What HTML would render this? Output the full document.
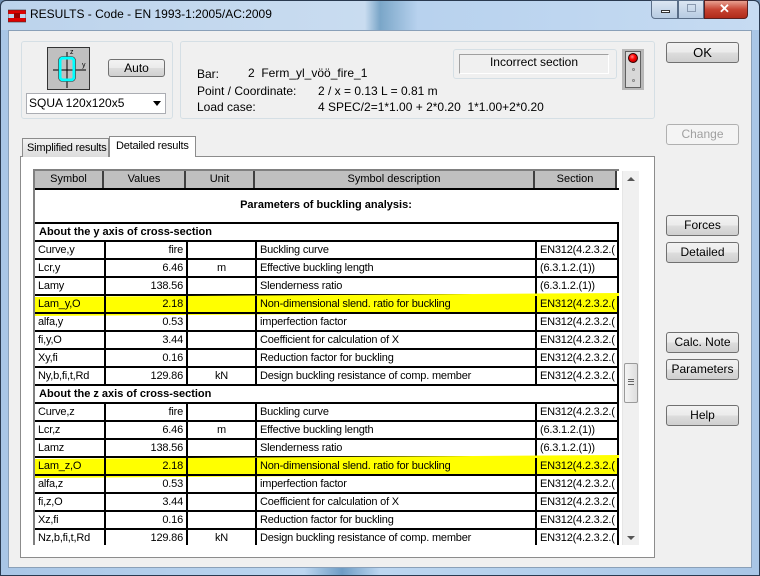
<!DOCTYPE html>
<html><head><meta charset="utf-8"><style>
*{box-sizing:border-box;margin:0;padding:0}
body{width:760px;height:576px;overflow:hidden;background:#6e8db0;font-family:"Liberation Sans",sans-serif;font-size:11px;color:#000;position:relative}
.a{position:absolute;white-space:nowrap}
.btn{position:absolute;border:1px solid #707070;border-radius:3px;background:linear-gradient(#f2f2f2,#ebebeb 50%,#dddddd 51%,#cfcfcf);text-align:center;font-size:12px;line-height:19px;white-space:nowrap}
.grp{position:absolute;border:1px solid #d5dfe5;border-radius:3px}
.c{position:absolute;height:18px;line-height:17px;padding:0 3px;white-space:nowrap;overflow:hidden;font-size:11px;letter-spacing:-0.2px}
.h{position:absolute;background:#c0c0c0;text-align:center;line-height:16px;height:17px;border-right:2px solid #404040}
</style></head><body>
<div class="a" style="left:0;top:0;width:760px;height:576px;background:linear-gradient(90deg,#a9c6e6,#bcd6f0 40%,#6e9cc4 45%,#bcd6f0 50%,#a9c6e6);border:1px solid #2a3a50;border-radius:6px 6px 0 0"></div>
<div class="a" style="left:0;top:0;width:760px;height:30px;background:linear-gradient(90deg,#bcd3ec 0,#c9dcf0 48%,#7aa6c8 50%,#b8d2ee 55%,#c6dbf2);border-radius:6px 6px 0 0;border:1px solid #2a3a50;border-bottom:none"></div>
<svg class="a" style="left:8px;top:8px" width="18" height="16"><rect x="0" y="2" width="18" height="4" fill="#d00"/><rect x="6" y="5" width="6" height="6" fill="#900"/><rect x="0" y="10" width="18" height="4" fill="#d00"/><rect x="0" y="2" width="18" height="12" fill="none" stroke="#333" stroke-width=".6"/></svg>
<div class="a" style="left:30px;top:7px;font-size:12px">RESULTS - Code - EN 1993-1:2005/AC:2009</div>
<div class="a" style="left:651px;top:0;width:27px;height:19px;border:1px solid #5a6e88;border-radius:0 0 0 4px;background:linear-gradient(#dbe6f3,#b7cbe2)"></div>
<div class="a" style="left:661px;top:10px;width:9px;height:3px;background:#fff;border:1px solid #333"></div>
<div class="a" style="left:678px;top:0;width:26px;height:19px;border:1px solid #5a6e88;background:linear-gradient(#dbe6f3,#b7cbe2)"></div>
<div class="a" style="left:687px;top:4px;width:9px;height:8px;border:1px solid #8a9ab0"></div>
<div class="a" style="left:704px;top:0;width:44px;height:19px;border:1px solid #5a2020;border-radius:0 0 4px 0;background:linear-gradient(#e8a090,#c74433 50%,#b02a1a)"></div>
<div class="a" style="left:719px;top:1px;color:#fff;font-weight:bold;font-size:13px">✕</div>
<div class="a" style="left:8px;top:30px;width:744px;height:538px;background:#f0f0f0;border:1px solid #8aa0b8"></div>
<div class="grp" style="left:21px;top:41px;width:152px;height:78px"></div>
<div class="a" style="left:47px;top:47px;width:43px;height:43px;background:#c0c0c0;border:1px solid #333"></div>
<svg class="a" style="left:48px;top:48px" width="41" height="41"><line x1="5" y1="22" x2="38" y2="22" stroke="#000"/><line x1="19" y1="4" x2="19" y2="40" stroke="#000"/><rect x="12" y="10" width="14" height="22" rx="3" fill="none" stroke="#0ff" stroke-width="3"/><rect x="10.5" y="8.5" width="17" height="25" rx="4" fill="none" stroke="#333" stroke-width=".6"/><text x="22" y="6" font-size="7" font-family="Liberation Sans">z</text><text x="34" y="19" font-size="7" font-family="Liberation Sans">y</text></svg>
<div class="btn" style="left:108px;top:59px;width:57px;height:18px;line-height:16px">Auto</div>
<div class="a" style="left:26px;top:93px;width:140px;height:21px;background:#fff;border:1px solid #abadb3;font-size:12px;line-height:19px;padding-left:2px">SQUA 120x120x5</div>
<div class="a" style="left:153px;top:101px;border:4px solid transparent;border-top:5px solid #000"></div>
<div class="grp" style="left:180px;top:41px;width:475px;height:78px"></div>
<div class="a" style="left:197px;top:67px;font-size:12px">Bar:</div>
<div class="a" style="left:248px;top:66px;font-size:12px">2&nbsp; Ferm_yl_vöö_fire_1</div>
<div class="a" style="left:197px;top:84px;font-size:12px">Point / Coordinate:</div>
<div class="a" style="left:318px;top:84px;font-size:12px">2 / x = 0.13 L = 0.81 m</div>
<div class="a" style="left:197px;top:100px;font-size:12px">Load case:</div>
<div class="a" style="left:318px;top:100px;font-size:12px">4 SPEC/2=1*1.00 + 2*0.20&nbsp; 1*1.00+2*0.20</div>
<div class="grp" style="left:453px;top:49px;width:164px;height:30px"></div>
<div class="a" style="left:459px;top:54px;width:150px;height:20px;border:1px solid #a0a0a0;border-right-color:#fff;border-bottom-color:#fff;text-align:center;font-size:12px;line-height:14px">Incorrect section</div>
<div class="a" style="left:622px;top:49px;width:22px;height:41px;background:#b8b8b8"></div>
<div class="a" style="left:625px;top:51px;width:16px;height:37px;border:1px solid #606060;background:#d8d8d8"></div>
<div class="a" style="left:628px;top:53px;width:10px;height:10px;border-radius:50%;background:radial-gradient(circle at 40% 35%,#ff8080,#f00 40%,#900);border:1px solid #300"></div>
<div class="a" style="left:632px;top:68px;width:3px;height:3px;border-radius:50%;border:1px solid #888"></div>
<div class="a" style="left:632px;top:79px;width:3px;height:3px;border-radius:50%;border:1px solid #888"></div>
<div class="btn" style="left:666px;top:42px;width:73px;height:21px;font-size:13px">OK</div>
<div class="btn" style="left:666px;top:124px;width:73px;height:21px;color:#a0a0a0;background:#f4f4f4;border-color:#b0b0b0">Change</div>
<div class="btn" style="left:666px;top:215px;width:73px;height:21px">Forces</div>
<div class="btn" style="left:666px;top:242px;width:73px;height:21px">Detailed</div>
<div class="btn" style="left:666px;top:332px;width:73px;height:21px">Calc. Note</div>
<div class="btn" style="left:666px;top:359px;width:73px;height:21px">Parameters</div>
<div class="btn" style="left:666px;top:405px;width:73px;height:21px">Help</div>
<div class="a" style="left:20px;top:156px;width:635px;height:402px;background:#fff;border:1px solid #8c8c8c"></div>
<div class="a" style="left:22px;top:138px;width:87px;height:19px;border:1px solid #8c8c8c;border-bottom:none;background:linear-gradient(#f2f2f2,#dcdcdc);font-size:11px;line-height:18px;padding-left:4px;letter-spacing:-0.2px">Simplified results</div>
<div class="a" style="left:109px;top:136px;width:87px;height:21px;border:1px solid #8c8c8c;border-bottom:none;background:#fff;font-size:11px;line-height:18px;padding-left:6px;letter-spacing:-0.2px">Detailed results</div>
<div class="a" style="left:33px;top:169px;width:586px;height:376px;overflow:hidden;border-left:2px solid #808080;border-top:2px solid #808080">
<div id="t" class="a" style="left:0;top:0;width:584px;height:380px;background:#fff"></div>
</div>
<div class="a" style="left:622px;top:171px;width:17px;height:374px;background:#f0f0f0;border-left:1px solid #e6e6e6"></div>
<div class="a" style="left:627px;top:177px;border:4px solid transparent;border-bottom:4px solid #555;border-top:none"></div>
<div class="a" style="left:627px;top:536px;border:4px solid transparent;border-top:4px solid #555;border-bottom:none"></div>
<div class="a" style="left:624px;top:363px;width:14px;height:40px;border:1px solid #9a9a9a;border-radius:2px;background:linear-gradient(90deg,#f4f4f4,#dedede)"></div>
<div class="a" style="left:628px;top:379px;width:6px;height:6px;border-top:1px solid #666;border-bottom:1px solid #666"></div>
<div class="a" style="left:628px;top:381px;width:6px;height:2px;border-top:1px solid #666"></div>
<script>
var t=document.getElementById('t'),h='';
var cols=[0,69,151,220,500,582];
function L(x,y,w,hh){h+='<div class="a" style="left:'+x+'px;top:'+y+'px;width:'+w+'px;height:'+hh+'px;background:#000"></div>';}
var hd=['Symbol','Values','Unit','Symbol description','Section'];
for(var i=0;i<5;i++)h+='<div class="h" style="left:'+cols[i]+'px;top:0;width:'+(cols[i+1]-cols[i])+'px">'+hd[i]+'</div>';
L(0,17,584,2);
h+='<div class="a" style="left:0;top:28px;width:582px;text-align:center;font-weight:bold;font-size:11px">Parameters of buckling analysis:</div>';
var rows=[
['S','About the y axis of cross-section'],
['Curve,y','fire','','Buckling curve','EN312(4.2.3.2.('],
['Lcr,y','6.46','m','Effective buckling length','(6.3.1.2.(1))'],
['Lamy','138.56','','Slenderness ratio','(6.3.1.2.(1))'],
['Lam_y,O','2.18','','Non-dimensional slend. ratio for buckling','EN312(4.2.3.2.(',1],
['alfa,y','0.53','','imperfection factor','EN312(4.2.3.2.('],
['fi,y,O','3.44','','Coefficient for calculation of X','EN312(4.2.3.2.('],
['Xy,fi','0.16','','Reduction factor for buckling','EN312(4.2.3.2.('],
['Ny,b,fi,t,Rd','129.86','kN','Design buckling resistance of comp. member','EN312(4.2.3.2.('],
['S','About the z axis of cross-section'],
['Curve,z','fire','','Buckling curve','EN312(4.2.3.2.('],
['Lcr,z','6.46','m','Effective buckling length','(6.3.1.2.(1))'],
['Lamz','138.56','','Slenderness ratio','(6.3.1.2.(1))'],
['Lam_z,O','2.18','','Non-dimensional slend. ratio for buckling','EN312(4.2.3.2.(',1],
['alfa,z','0.53','','imperfection factor','EN312(4.2.3.2.('],
['fi,z,O','3.44','','Coefficient for calculation of X','EN312(4.2.3.2.('],
['Xz,fi','0.16','','Reduction factor for buckling','EN312(4.2.3.2.('],
['Nz,b,fi,t,Rd','129.86','kN','Design buckling resistance of comp. member','EN312(4.2.3.2.(']];
var y=53;L(0,y-2,584,2);
rows.forEach(function(r){
 if(r[0]=='S'){h+='<div class="c" style="left:0;top:'+y+'px;font-weight:bold;padding-left:4px;letter-spacing:0">'+r[1]+'</div>';}
 else{
  if(r[5]){h+='<div class="a" style="left:-2px;top:'+(y-1)+'px;width:590px;height:19px;background:#ffff00;transform:skewY(-0.4deg)"></div>';}
  for(var i=0;i<5;i++){var al=i==1?'right':(i==2?'center':'left');
   h+='<div class="c" style="left:'+(cols[i]+(i?2:0))+'px;top:'+y+'px;width:'+(cols[i+1]-cols[i]-2)+'px;text-align:'+al+'">'+r[i]+'</div>';}
  for(var i=1;i<5;i++)L(cols[i],y,2,18);
 }
 L(cols[5],y,2,18);
 y+=18;L(0,y-2,584,2);
});
t.innerHTML=h;
</script>
</body></html>
